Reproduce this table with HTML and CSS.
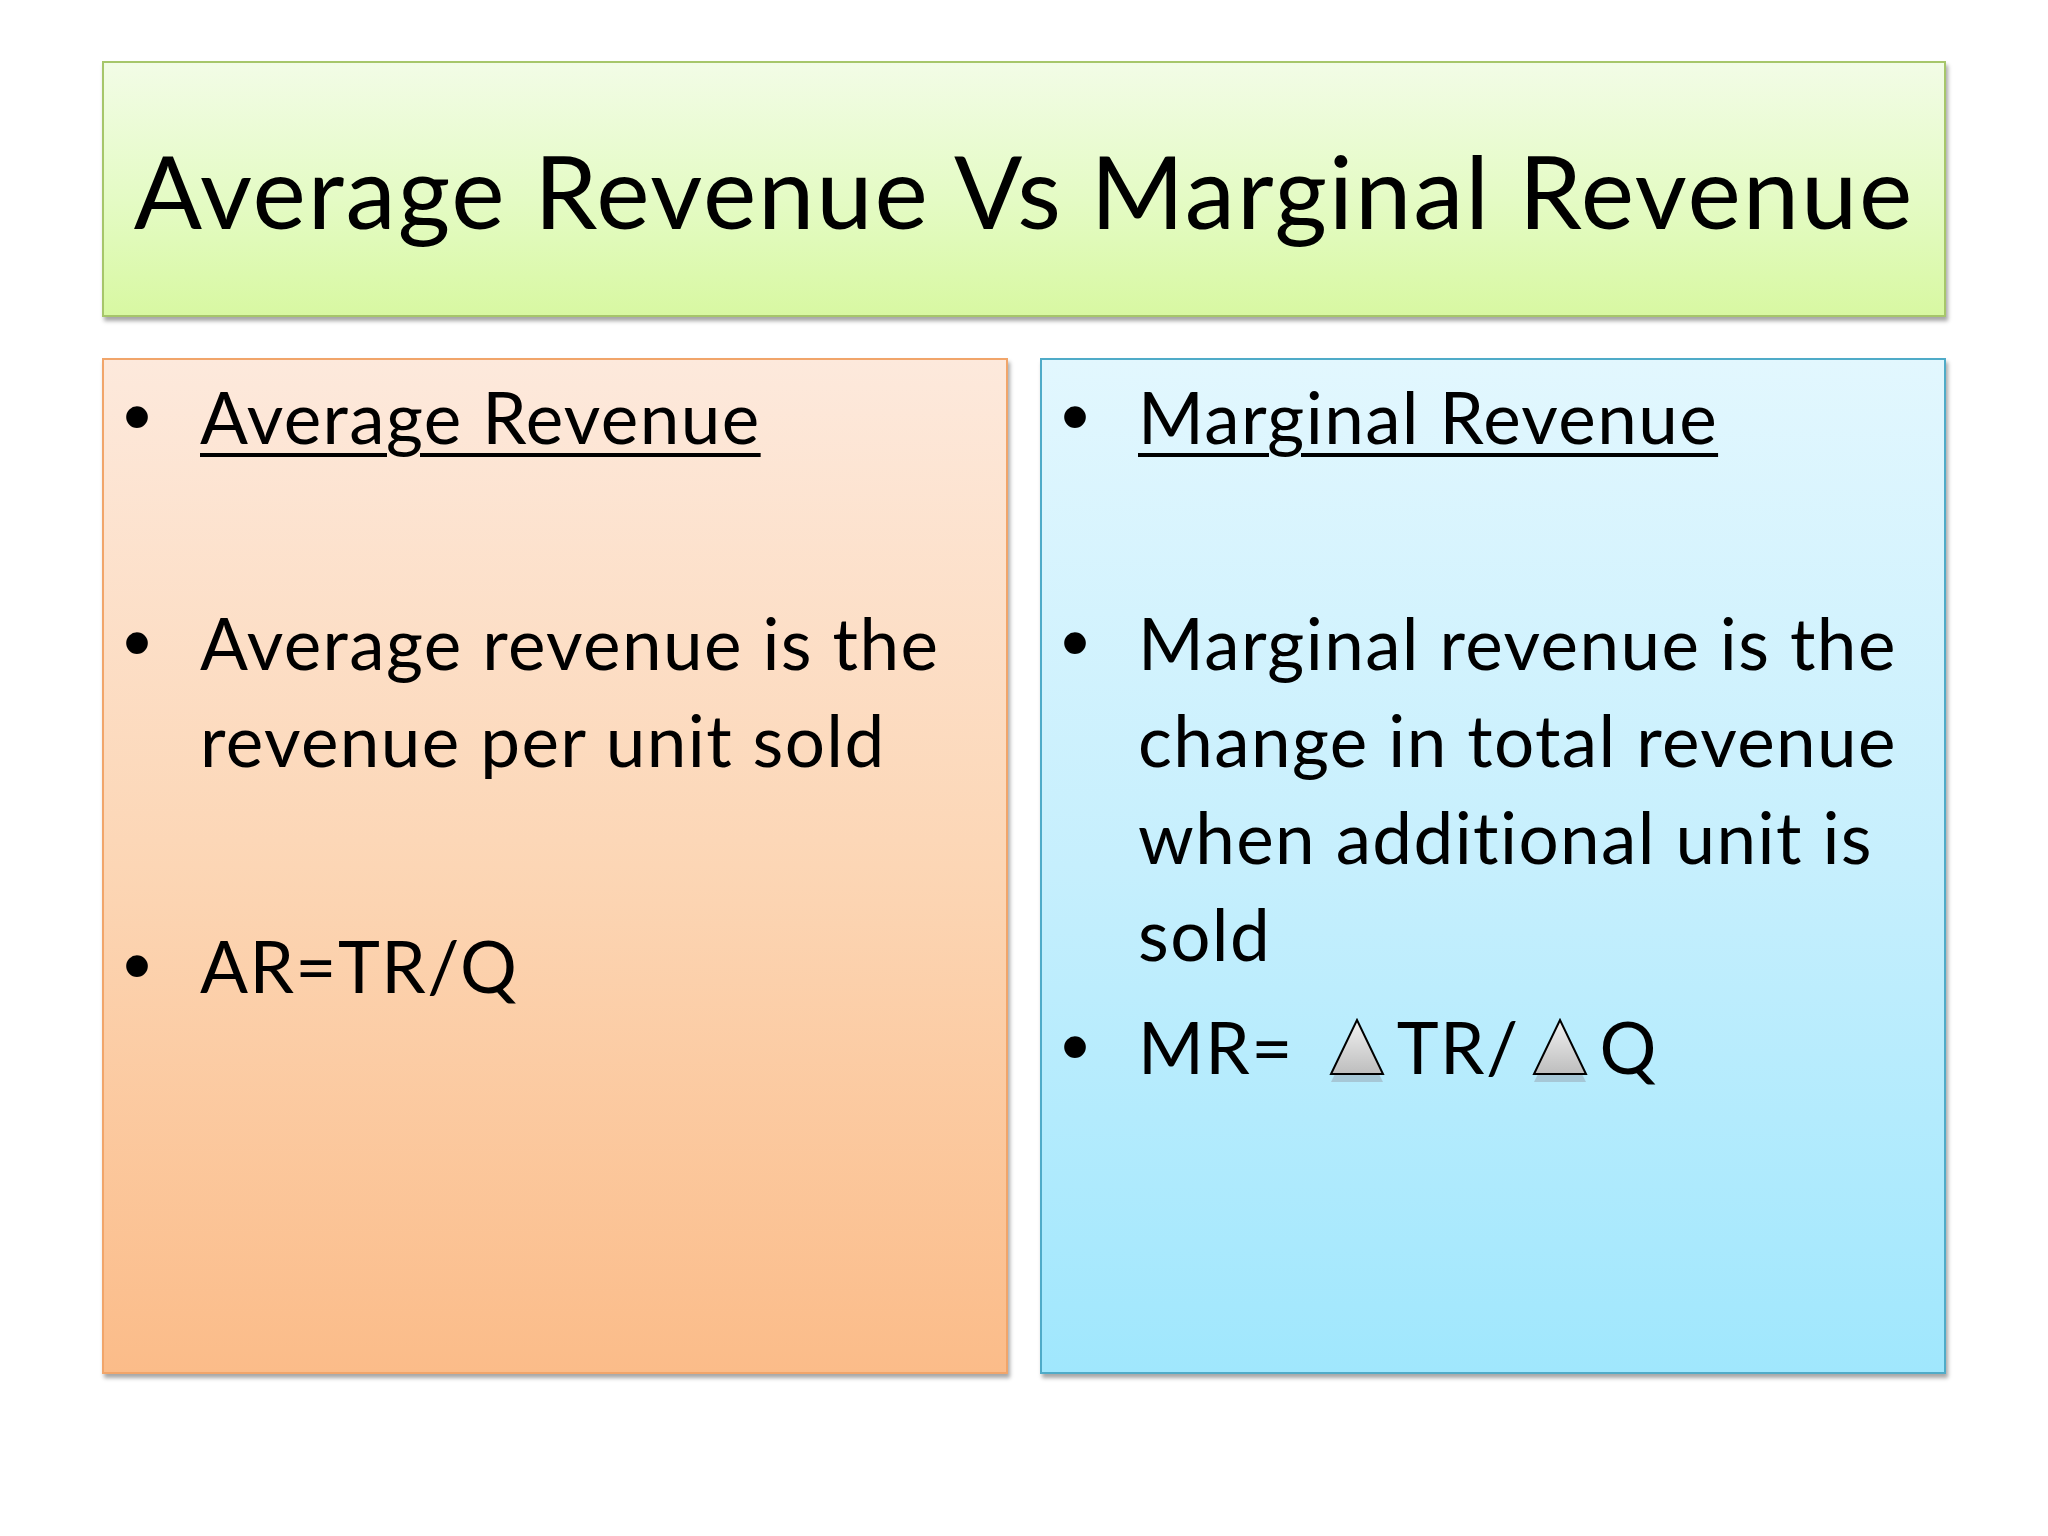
FILE: index.html
```html
<!DOCTYPE html>
<html lang="en">
<head>
<meta charset="utf-8">
<title>Average Revenue Vs Marginal Revenue</title>
<link rel="stylesheet" href="styles.css">
</head>
<body>
<main class="slide">
  <header class="title-box">
    <h1 class="title">Average Revenue Vs Marginal Revenue</h1>
  </header>
  <section class="columns">
    <div class="card card-orange">
      <p class="item"><u class="head">Average Revenue</u></p>
      <p class="blank"></p>
      <p class="item">Average revenue is the<br>revenue per unit sold</p>
      <p class="blank"></p>
      <p class="item">AR=TR/Q</p>
    </div>
    <div class="card card-blue">
      <p class="item"><u class="head">Marginal Revenue</u></p>
      <p class="blank"></p>
      <p class="item">Marginal revenue is the<br>change in total revenue<br>when additional unit is<br>sold</p>
      <p class="item formula">MR=<svg class="delta d1" viewBox="0 0 60 64" width="60" height="64" aria-hidden="true"><defs><linearGradient id="tg1" x1="0" y1="0" x2="0" y2="1"><stop offset="0" stop-color="#f2f2f2"/><stop offset="1" stop-color="#bdbdbd"/></linearGradient></defs><polygon points="4,60 56,60 30,8" fill="#9fb8c4" transform="translate(0,4)" opacity="0.7"/><polygon points="4,56 56,56 30,2" fill="url(#tg1)" stroke="#000" stroke-width="2" stroke-linejoin="miter"/></svg>TR/<svg class="delta d2" viewBox="0 0 60 64" width="60" height="64" aria-hidden="true"><polygon points="4,60 56,60 30,8" fill="#9fb8c4" transform="translate(0,4)" opacity="0.7"/><polygon points="4,56 56,56 30,2" fill="url(#tg1)" stroke="#000" stroke-width="2" stroke-linejoin="miter"/></svg>Q</p>
    </div>
  </section>
</main>
</body>
</html>
```

FILE: styles.css
```css
html, body {
  margin: 0;
  padding: 0;
  background: #ffffff;
}

body {
  width: 2048px;
  height: 1536px;
  overflow: hidden;
  font-family: Lato, "Open Sans", sans-serif;
  color: #000;
}

.slide {
  box-sizing: border-box;
  width: 2048px;
  height: 1536px;
  padding: 61px 102px 0 102px;
  display: flex;
  flex-direction: column;
  gap: 41px;
}

.title-box {
  box-sizing: border-box;
  height: 256px;
  border: 2px solid #a6c66a;
  background: linear-gradient(to bottom, #f2fce6 0%, #e4fbc4 55%, #d8f8a2 100%);
  box-shadow: 2px 4px 4px rgba(0, 0, 0, 0.35);
  display: flex;
  align-items: center;
  justify-content: center;
}

.title {
  margin: 0;
  font-weight: 400;
  font-size: 101px;
  letter-spacing: 1.9px;
  line-height: 1.2;
  white-space: nowrap;
  position: relative;
  top: 2px;
}

.columns {
  display: grid;
  grid-template-columns: 1fr 1fr;
  gap: 32px;
  height: 1016px;
}

.card {
  box-sizing: border-box;
  height: 1016px;
  padding: 8px 10px 0 19px;
  box-shadow: 2px 4px 4px rgba(0, 0, 0, 0.35);
}

.card-orange {
  border: 2px solid #f1a56a;
  background: linear-gradient(to bottom, #fde9dc 0%, #fcd6b5 50%, #fbbc89 100%);
}

.card-blue {
  border: 2px solid #4fabc8;
  background: linear-gradient(to bottom, #e2f7fe 0%, #c6effd 50%, #a0e7fd 100%);
}

.item, .blank {
  margin: 16px 0 0 0;
  font-size: 71px;
  letter-spacing: 1.4px;
  line-height: 97px;
  padding-left: 77px;
  text-indent: -77px;
  white-space: nowrap;
}

.item:first-child {
  margin-top: 0;
}

.blank {
  height: 97px;
}

.item::before {
  content: "\2022";
  font-family: "Liberation Sans", Arial, sans-serif;
  font-size: 80px;
  letter-spacing: 0;
  display: inline-block;
  width: 77px;
  text-indent: 0;
}

.head {
  text-decoration-thickness: 4px;
  text-underline-offset: 9px;
}

.delta {
  display: inline-block;
  vertical-align: baseline;
  width: 60px;
  height: 64px;
  margin-bottom: -8px;
}

.d1 {
  margin-left: 33px;
  margin-right: 10px;
}

.d2 {
  margin-left: 10px;
  margin-right: 10px;
}
```
